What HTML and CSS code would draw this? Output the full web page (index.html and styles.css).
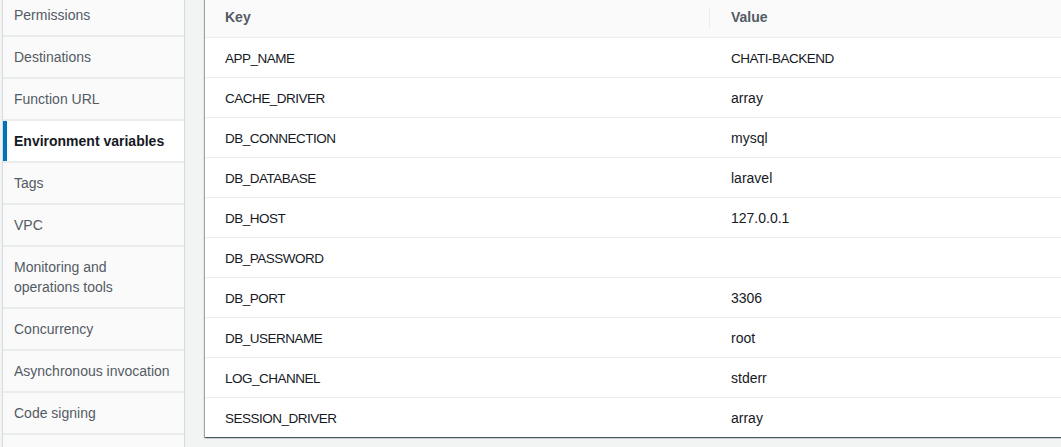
FILE: index.html
```html
<!DOCTYPE html>
<html>
<head>
<meta charset="utf-8">
<link rel="stylesheet" href="styles.css">
</head>
<body>
<div class="layout">
  <nav class="sidebar">
    <div class="nav-item">Permissions</div>
    <div class="nav-item">Destinations</div>
    <div class="nav-item">Function URL</div>
    <div class="nav-item active">Environment variables</div>
    <div class="nav-item">Tags</div>
    <div class="nav-item">VPC</div>
    <div class="nav-item tall">Monitoring and<br>operations tools</div>
    <div class="nav-item">Concurrency</div>
    <div class="nav-item">Asynchronous invocation</div>
    <div class="nav-item">Code signing</div>
    <div class="nav-item"></div>
  </nav>
  <main class="card">
    <div class="row head">
      <div class="cell">Key</div>
      <div class="cell"><span class="divider">Value</span></div>
    </div>
    <div class="row"><div class="cell caps">APP_NAME</div><div class="cell val caps">CHATI-BACKEND</div></div>
    <div class="row"><div class="cell caps">CACHE_DRIVER</div><div class="cell val">array</div></div>
    <div class="row"><div class="cell caps">DB_CONNECTION</div><div class="cell val">mysql</div></div>
    <div class="row"><div class="cell caps">DB_DATABASE</div><div class="cell val">laravel</div></div>
    <div class="row"><div class="cell caps">DB_HOST</div><div class="cell val">127.0.0.1</div></div>
    <div class="row"><div class="cell caps">DB_PASSWORD</div><div class="cell val"></div></div>
    <div class="row"><div class="cell caps">DB_PORT</div><div class="cell val">3306</div></div>
    <div class="row"><div class="cell caps">DB_USERNAME</div><div class="cell val">root</div></div>
    <div class="row"><div class="cell caps">LOG_CHANNEL</div><div class="cell val">stderr</div></div>
    <div class="row last"><div class="cell caps">SESSION_DRIVER</div><div class="cell val">array</div></div>
  </main>
</div>
</body>
</html>
```
FILE: styles.css
```css
html, body {
  margin: 0;
  padding: 0;
  background: #f2f3f3;
  overflow: hidden;
  height: 447px;
}
body {
  font-family: "Liberation Sans", Arial, sans-serif;
  font-size: 14px;
  color: #16191f;
}
.layout {
  display: flex;
  align-items: flex-start;
  margin-top: -5px;
  padding-left: 2px;
}
.sidebar {
  width: 181px;
  flex: none;
  border-left: 1px solid #d5dbdb;
  border-right: 1px solid #d5dbdb;
  display: flex;
  flex-direction: column;
  gap: 2px;
  background: #eaeded;
}
.nav-item {
  height: 40px;
  box-sizing: border-box;
  padding: 0 10px 0 11px;
  display: flex;
  align-items: center;
  background: #fafafa;
  color: #545b64;
  line-height: 20px;
}
.nav-item.tall {
  height: 60px;
}
.nav-item.active {
  background: #ffffff;
  color: #16191f;
  font-weight: 700;
  border-left: 4px solid #0073bb;
  padding-left: 7px;
}
.card {
  margin-left: 20px;
  margin-top: 2px;
  width: 900px;
  flex: none;
  background: #fff;
  box-shadow: 0 1px 1px 0 rgba(0, 28, 36, 0.5), 1px 1px 1px 0 rgba(0, 28, 36, 0.2), -1px 1px 1px 0 rgba(0, 28, 36, 0.3);
}
.row {
  display: grid;
  grid-template-columns: 504px 1fr;
  height: 40px;
  box-sizing: border-box;
  border-bottom: 1px solid #eaeded;
  align-items: center;
}
.row.last {
  border-bottom: none;
  height: 39px;
}
.row.head {
  height: 41px;
  background: #fafafa;
  color: #545b64;
  font-weight: 700;
}
.cell {
  padding-left: 20px;
}
.caps {
  font-size: 13.5px;
  letter-spacing: -0.5px;
  padding-top: 1px;
}
.row .cell + .cell {
  padding-left: 0;
}
.val {
  padding-left: 22px !important;
}
.divider {
  display: block;
  border-left: 1px solid #eaeded;
  padding-left: 21px;
  line-height: 21px;
}
```
